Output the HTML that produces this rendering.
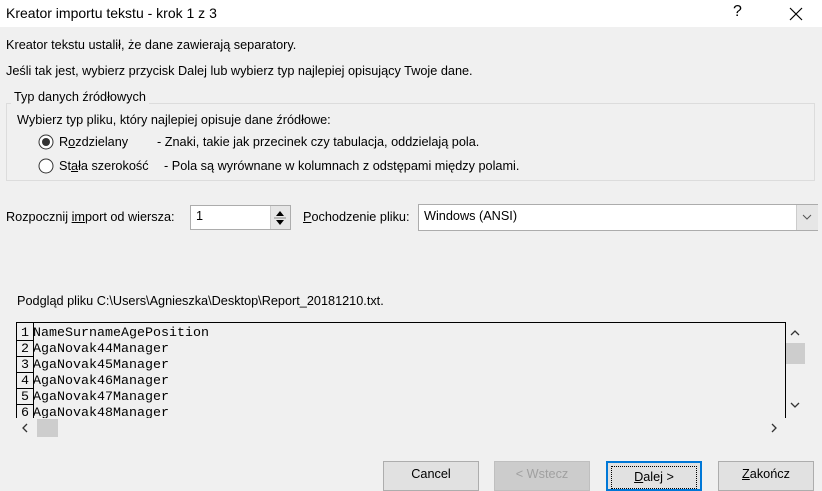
<!DOCTYPE html>
<html><head><meta charset="utf-8"><style>
body{margin:0;width:822px;height:487px;background:#f0f0f0;font-family:"Liberation Sans",sans-serif;font-size:12.7px;color:#000;position:relative;overflow:hidden}
.a{position:absolute;white-space:nowrap}
.btn{position:absolute;top:461px;height:30px;width:96px;border:1px solid #adadad;background:#e1e1e1;box-sizing:border-box;text-align:center;line-height:24px}
.mono{font-family:"Liberation Mono",monospace;font-size:13.33px}
.row{position:absolute;left:17px;height:16px;line-height:16px}
.row span{display:inline-block;width:16px;border-bottom:1px solid #000;text-align:center;height:14px;line-height:15px}
u{text-decoration:underline}
</style></head><body>
<div class="a" style="left:0;top:0;width:822px;height:27px;background:#fff"></div>
<div class="a" style="left:6px;top:5px;font-size:14px">Kreator importu tekstu - krok 1 z 3</div>
<div class="a" style="left:733px;top:3px;font-size:16px">?</div>
<svg class="a" style="left:789px;top:7px" width="14" height="14"><path d="M1 1L13 13M13 1L1 13" stroke="#000" stroke-width="1.2"/></svg>
<div class="a" style="left:6px;top:38px">Kreator tekstu ustalił, że dane zawierają separatory.</div>
<div class="a" style="left:6px;top:64px">Jeśli tak jest, wybierz przycisk Dalej lub wybierz typ najlepiej opisujący Twoje dane.</div>
<div class="a" style="left:6px;top:103px;width:809px;height:78px;border:1px solid #dcdcdc;box-sizing:border-box"></div>
<div class="a" style="left:11px;top:90px;background:#f0f0f0;padding:0 3px">Typ danych źródłowych</div>
<div class="a" style="left:17px;top:113px">Wybierz typ pliku, który najlepiej opisuje dane źródłowe:</div>
<svg class="a" style="left:38px;top:134px" width="16" height="16"><circle cx="8" cy="8" r="7" fill="#fff" stroke="#333"/><circle cx="8" cy="8" r="4" fill="#333"/></svg>
<div class="a" style="left:59px;top:135px">R<u>o</u>zdzielany</div>
<div class="a" style="left:157px;top:135px">- Znaki, takie jak przecinek czy tabulacja, oddzielają pola.</div>
<svg class="a" style="left:38px;top:158px" width="16" height="16"><circle cx="8" cy="8" r="7" fill="#fff" stroke="#333"/></svg>
<div class="a" style="left:59px;top:159px">St<u>a</u>ła szerokość</div>
<div class="a" style="left:164px;top:159px">- Pola są wyrównane w kolumnach z odstępami między polami.</div>
<div class="a" style="left:6px;top:210px">Rozpocznij <u>im</u>port od wiersza:</div>
<div class="a" style="left:190px;top:205px;width:101px;height:25px;border:1px solid #acacac;background:#fff;box-sizing:border-box"></div>
<div class="a" style="left:196px;top:209px">1</div>
<div class="a" style="left:270px;top:206px;width:19px;height:23px;background:#e6e6e6;border-left:1px solid #ccc"></div>
<svg class="a" style="left:274px;top:208px" width="12" height="20"><path d="M2 8L6 3L10 8Z M2 12L6 17L10 12Z" fill="#000"/><path d="M0 10H12" stroke="#888"/></svg>
<div class="a" style="left:303px;top:210px"><u>P</u>ochodzenie pliku:</div>
<div class="a" style="left:418px;top:204px;width:400px;height:27px;border:1px solid #acacac;background:#fff;box-sizing:border-box"></div>
<div class="a" style="left:424px;top:209px">Windows (ANSI)</div>
<div class="a" style="left:796px;top:205px;width:21px;height:25px;background:#e6e6e6;border-left:1px solid #ccc"></div>
<svg class="a" style="left:802px;top:214px" width="10" height="6"><path d="M1 1L5 5L9 1" stroke="#555" fill="none"/></svg>
<div class="a" style="left:17px;top:294px">Podgląd pliku C:\Users\Agnieszka\Desktop\Report_20181210.txt.</div>
<div class="a" style="left:16px;top:322px;width:768px;height:96px;border-top:1px solid #000;border-left:1px solid #000;border-right:1px solid #000;background:#f0f0f0;overflow:hidden">
<div class="a" style="left:16px;top:0;width:1px;height:100px;background:#000"></div>
</div>
<div class="mono">
<div class="row" style="top:326px"><span>1</span>NameSurnameAgePosition</div>
<div class="row" style="top:342px"><span>2</span>AgaNovak44Manager</div>
<div class="row" style="top:358px"><span>3</span>AgaNovak45Manager</div>
<div class="row" style="top:374px"><span>4</span>AgaNovak46Manager</div>
<div class="row" style="top:390px"><span>5</span>AgaNovak47Manager</div>
<div class="row" style="top:406px;height:12px;overflow:hidden"><span>6</span>AgaNovak48Manager</div>
</div>
<div class="a" style="left:16px;top:418px;width:770px;height:2px;background:#f0f0f0"></div>
<svg class="a" style="left:790px;top:329px" width="10" height="8"><path d="M1 6L5 2L9 6" stroke="#333" fill="none" stroke-width="1.3"/></svg>
<div class="a" style="left:786px;top:343px;width:19px;height:21px;background:#cdcdcd"></div>
<svg class="a" style="left:790px;top:401px" width="10" height="8"><path d="M1 2L5 6L9 2" stroke="#333" fill="none" stroke-width="1.3"/></svg>
<svg class="a" style="left:21px;top:423px" width="8" height="10"><path d="M6 1L2 5L6 9" stroke="#333" fill="none" stroke-width="1.3"/></svg>
<div class="a" style="left:37px;top:419px;width:21px;height:18px;background:#cdcdcd"></div>
<svg class="a" style="left:770px;top:423px" width="8" height="10"><path d="M2 1L6 5L2 9" stroke="#333" fill="none" stroke-width="1.3"/></svg>
<div class="btn" style="left:383px">Cancel</div>
<div class="btn" style="left:494px;color:#a0a0a0;border-color:#bfbfbf;background:#ccc">&lt; Wstecz</div>
<div class="btn" style="left:606px;border:2px solid #0078d7"><div style="position:absolute;left:3px;top:3px;right:3px;bottom:0;border:1px dotted #000;line-height:20px"><u>D</u>alej &gt;</div></div>
<div class="btn" style="left:718px"><u>Z</u>akończ</div>
</body></html>
